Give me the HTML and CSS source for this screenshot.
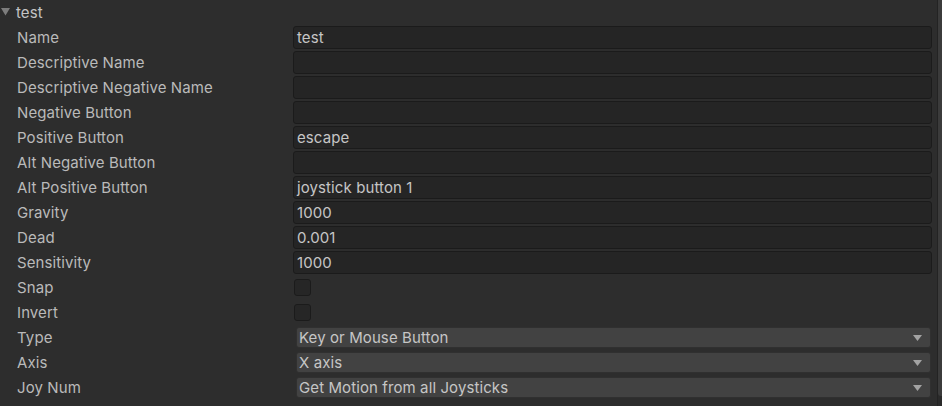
FILE: index.html
```html
<!DOCTYPE html>
<html>
<head>
<meta charset="utf-8">
<link rel="stylesheet" href="styles.css">
</head>
<body>
<div class="page">
  <div class="content">
    <div class="header">
      <svg class="fold" width="9" height="8" viewBox="0 0 9 8"><polygon points="0,0 9,0 4.5,7.5" fill="#7d7d7d"/></svg>
      <span class="title">test</span>
    </div>
    <div class="row"><div class="label">Name</div><div class="field">test</div></div>
    <div class="row"><div class="label">Descriptive Name</div><div class="field"></div></div>
    <div class="row"><div class="label">Descriptive Negative Name</div><div class="field"></div></div>
    <div class="row"><div class="label">Negative Button</div><div class="field"></div></div>
    <div class="row"><div class="label">Positive Button</div><div class="field">escape</div></div>
    <div class="row"><div class="label">Alt Negative Button</div><div class="field"></div></div>
    <div class="row"><div class="label">Alt Positive Button</div><div class="field">joystick button 1</div></div>
    <div class="row"><div class="label">Gravity</div><div class="field">1000</div></div>
    <div class="row"><div class="label">Dead</div><div class="field">0.001</div></div>
    <div class="row"><div class="label">Sensitivity</div><div class="field">1000</div></div>
    <div class="row"><div class="label">Snap</div><div class="checkcell"><div class="checkbox"></div></div></div>
    <div class="row"><div class="label">Invert</div><div class="checkcell"><div class="checkbox"></div></div></div>
    <div class="row"><div class="label">Type</div><div class="dropdown"><span>Key or Mouse Button</span><svg width="9" height="6" viewBox="0 0 9 6"><polygon points="0,0 9,0 4.5,6" fill="#a3a3a3"/></svg></div></div>
    <div class="row"><div class="label">Axis</div><div class="dropdown"><span>X axis</span><svg width="9" height="6" viewBox="0 0 9 6"><polygon points="0,0 9,0 4.5,6" fill="#a3a3a3"/></svg></div></div>
    <div class="row"><div class="label">Joy Num</div><div class="dropdown"><span>Get Motion from all Joysticks</span><svg width="9" height="6" viewBox="0 0 9 6"><polygon points="0,0 9,0 4.5,6" fill="#a3a3a3"/></svg></div></div>
  </div>
  <div class="scrollbar"><div class="thumb"></div></div>
</div>
</body>
</html>
```
FILE: styles.css
```css
html, body {
  margin: 0;
  padding: 0;
  background: #2d2d2d;
}
body {
  width: 942px;
  height: 406px;
  overflow: hidden;
  font-family: Inter, "Noto Sans", sans-serif;
  font-size: 15px;
  letter-spacing: 0.1px;
  color: #bababa;
}
.page {
  display: flex;
  height: 406px;
}
.content {
  flex: 1;
  display: flex;
  flex-direction: column;
  padding-right: 5px;
}
.header {
  height: 25px;
  display: flex;
  align-items: center;
}
.fold {
  margin-left: 1px;
  margin-top: -1px;
}
.title {
  margin-left: 6px;
  color: #c4c4c4;
}
.row {
  height: 25px;
  display: grid;
  grid-template-columns: 293px 1fr;
  align-items: center;
}
.label {
  padding-left: 17px;
  white-space: nowrap;
}
.field {
  height: 23px;
  box-sizing: border-box;
  background: #252525;
  border: 1px solid #1b1b1b;
  border-radius: 3px;
  padding-left: 3px;
  line-height: 21px;
  color: #c6c6c6;
}
.checkcell {
  display: flex;
  align-items: center;
}
.checkbox {
  width: 17px;
  height: 17px;
  box-sizing: border-box;
  margin-left: 1px;
  background: #262626;
  border: 1px solid #1b1b1b;
  border-radius: 3px;
}
.dropdown {
  height: 21px;
  box-sizing: border-box;
  margin-left: 3px;
  margin-right: 1px;
  background: #424242;
  border: 1px solid #303030;
  border-radius: 3px;
  display: flex;
  align-items: center;
  justify-content: space-between;
  padding-left: 2px;
  padding-right: 8px;
  color: #c6c6c6;
}
.scrollbar {
  width: 5px;
  box-sizing: border-box;
  border-left: 1px solid #232323;
  background: #2a2a2a;
}
.thumb {
  height: 396px;
  background: #3b3b3b;
  border-bottom-left-radius: 3px;
}
```
